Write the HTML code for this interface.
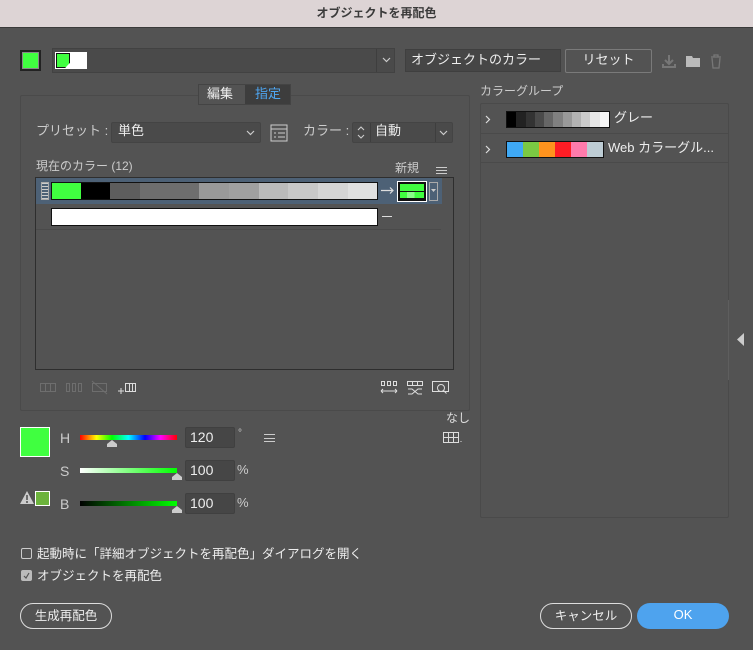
<!DOCTYPE html>
<html><head><meta charset="utf-8"><style>
*{box-sizing:border-box;margin:0;padding:0}
body{width:753px;height:650px;background:#535353;font-family:"Liberation Sans","Noto Sans CJK JP",sans-serif;color:#ddd;font-size:12px;position:relative;overflow:hidden}
.a{position:absolute}
.t{white-space:nowrap;line-height:1.15}
</style></head><body>
<div class="a" style="left:0;top:0;width:753px;height:28px;background:#ddd4d5;border-bottom:1px solid #3a3a3a"></div>
<div class="a t" style="left:0;top:7px;width:753px;text-align:center;color:#3a3a3a;font-size:12px;font-weight:bold">オブジェクトを再配色</div>

<div class="a" style="left:20px;top:50px;width:21px;height:21px;background:#222;padding:2px"><div style="width:100%;height:100%;background:#888;padding:1px"><div style="width:100%;height:100%;background:#40ff40"></div></div></div>
<div class="a" style="left:52px;top:48px;width:343px;height:25px;background:#4a4a4a;border:1px solid #424242"></div>
<div class="a" style="left:376px;top:49px;width:1px;height:23px;background:#3e3e3e"></div>
<svg class="a" style="left:382px;top:57px" width="9" height="6"><path d="M1 1l3.5 3.5L8 1" stroke="#ccc" fill="none" stroke-width="1.2"/></svg>
<div class="a" style="left:55px;top:52px;width:32px;height:17px;background:#fff"></div>
<div class="a" style="left:56px;top:53px;width:14px;height:15px;background:#40ff40;border:1px solid #111;clip-path:polygon(0 0,100% 0,100% 65%,65% 100%,0 100%)"></div>

<div class="a" style="left:405px;top:49px;width:156px;height:23px;background:#464646;border:1px solid #3f3f3f"></div>
<div class="a t" style="left:411px;top:53px;color:#eee;font-size:13px">オブジェクトのカラー</div>
<div class="a" style="left:565px;top:49px;width:87px;height:24px;border:1px solid #7a7a7a;border-radius:2px"></div>
<div class="a t" style="left:565px;top:53px;width:87px;text-align:center;color:#eee;font-size:13px">リセット</div>
<svg class="a" style="left:660px;top:52px" width="66" height="18"><path d="M9 3v8M5 8l4 4 4-4M3 12v3h12v-3" stroke="#777" stroke-width="2" fill="none"/><path d="M26 4h6l1 2h7v9H26z" fill="#bbb"/><path d="M51 5h10M54 5V3h4v2M52 6l1 10h6l1-10" stroke="#777" stroke-width="1.3" fill="none"/></svg>

<!-- left panel -->
<div class="a" style="left:20px;top:95px;width:450px;height:316px;border:1px solid #4a4a4a;border-radius:2px"></div>
<div class="a" style="left:198px;top:84px;width:93px;height:21px;background:#535353;border:1px solid #444"></div>
<div class="a" style="left:245px;top:85px;width:45px;height:19px;background:#3d3d3d"></div>
<div class="a t" style="left:207px;top:87px;color:#eee;font-size:13px">編集</div>
<div class="a t" style="left:255px;top:87px;color:#4ea6f2;font-size:13px">指定</div>

<div class="a t" style="left:36px;top:124px;color:#ccc;font-size:13px">プリセット :</div>
<div class="a" style="left:111px;top:122px;width:150px;height:21px;background:#4a4a4a;border:1px solid #444;border-radius:2px"></div>
<div class="a t" style="left:118px;top:124px;color:#eee;font-size:13px">単色</div>
<svg class="a" style="left:246px;top:130px" width="9" height="6"><path d="M1 1l3.5 3.5L8 1" stroke="#ccc" fill="none" stroke-width="1.2"/></svg>
<svg class="a" style="left:270px;top:124px" width="18" height="18"><rect x="1" y="1" width="16" height="16" fill="none" stroke="#ccc"/><path d="M1 5h16M4 9h2M8 9h7M4 13h2M8 13h7" stroke="#ccc"/></svg>
<div class="a t" style="left:303px;top:124px;color:#ccc;font-size:13px">カラー :</div>
<div class="a" style="left:352px;top:122px;width:101px;height:21px;background:#4a4a4a;border:1px solid #444;border-radius:2px"></div>
<div class="a" style="left:370px;top:123px;width:1px;height:19px;background:#3e3e3e"></div>
<div class="a" style="left:435px;top:123px;width:1px;height:19px;background:#3e3e3e"></div>
<svg class="a" style="left:356px;top:124px" width="10" height="17"><path d="M2 6l3-3 3 3M2 11l3 3 3-3" stroke="#ccc" fill="none" stroke-width="1.1"/></svg>
<div class="a t" style="left:375px;top:124px;color:#eee;font-size:13px">自動</div>
<svg class="a" style="left:439px;top:130px" width="9" height="6"><path d="M1 1l3.5 3.5L8 1" stroke="#ccc" fill="none" stroke-width="1.2"/></svg>

<div class="a t" style="left:36px;top:160px;color:#ccc;font-size:12px">現在のカラー (12)</div>
<div class="a t" style="left:395px;top:162px;color:#ccc;font-size:12px">新規</div>
<div class="a" style="left:436px;top:167px;width:11px;height:7px;border-top:1px solid #ccc;border-bottom:1px solid #ccc"></div>
<div class="a" style="left:436px;top:170px;width:11px;height:1px;background:#ccc"></div>

<div class="a" style="left:35px;top:177px;width:419px;height:193px;border:1px solid #2e2e2e"></div>
<div class="a" style="left:36px;top:178px;width:406px;height:26px;background:#4d6176"></div>
<div class="a" style="left:41px;top:182px;width:8px;height:18px;border:1px solid #aaa;background:repeating-linear-gradient(#ccc 0 1px,transparent 1px 3px)"></div>
<div class="a" style="left:51px;top:182px;width:327px;height:18px;border:1px solid #111;display:flex">
<div style="width:29px;background:#40ff40"></div><div style="width:29px;background:#000"></div><div style="width:30px;background:#5d5d5d"></div><div style="width:59px;background:#6e6e6e"></div><div style="width:30px;background:#999"></div><div style="width:30px;background:#a0a0a0"></div><div style="width:29px;background:#bbb"></div><div style="width:30px;background:#c8c8c8"></div><div style="width:30px;background:#d5d5d5"></div><div style="flex:1;background:#e0e0e0"></div></div>
<svg class="a" style="left:381px;top:186px" width="14" height="9"><path d="M0 4.5h12M9 1.5l3 3-3 3" stroke="#ddd" fill="none" stroke-width="1.2"/></svg>
<div class="a" style="left:397px;top:181px;width:30px;height:21px;border:1px solid #fff;background:#111;padding:2px"><div style="height:7px;background:#40ff40"></div><div style="height:6px;margin-top:1px;background:linear-gradient(90deg,#40ff40 30%,#8f8 30% 60%,#40ff40 60%)"></div></div>
<div class="a" style="left:429px;top:182px;width:9px;height:19px;border:1px solid #aaa"></div>
<svg class="a" style="left:431px;top:189px" width="5" height="4"><path d="M0 0h5L2.5 3z" fill="#ccc"/></svg>
<div class="a" style="left:51px;top:208px;width:327px;height:18px;border:1px solid #111;background:#fff"></div>
<div class="a" style="left:382px;top:216px;width:10px;height:1px;background:#ddd"></div>
<div class="a" style="left:36px;top:229px;width:405px;height:1px;background:#4a4a4a"></div>

<svg class="a" style="left:38px;top:380px" width="100" height="18"><g stroke="#6e6e6e" fill="none"><rect x="2.5" y="3.5" width="15" height="8"/><path d="M7.5 3.5v8M12.5 3.5v8"/><rect x="28.5" y="3.5" width="3" height="8"/><rect x="34.5" y="3.5" width="3" height="8"/><rect x="40.5" y="3.5" width="3" height="8"/><rect x="54.5" y="3.5" width="14" height="8"/><path d="M54 1l15 13"/></g><g stroke="#ddd" fill="none"><rect x="87.5" y="3.5" width="10" height="8"/><path d="M91.5 3.5v8M94.5 3.5v8M80 11h6M83 8v6"/></g></svg>
<svg class="a" style="left:380px;top:380px" width="72" height="20"><g stroke="#ddd" fill="none"><rect x="1.5" y="1.5" width="3" height="4"/><rect x="7.5" y="1.5" width="3" height="4"/><rect x="13.5" y="1.5" width="3" height="4"/><path d="M1 11h16M1 11l2-2M1 11l2 2M17 11l-2-2M17 11l-2 2"/><rect x="27.5" y="1.5" width="15" height="4"/><path d="M32.5 1.5v4M37.5 1.5v4M28 9h4l6 5h4M28 14h4l6-5h4"/><rect x="52.5" y="1.5" width="16" height="10"/><circle cx="61" cy="8" r="3.5" fill="#535353"/><path d="M63.5 10.5l3 3"/></g></svg>

<!-- HSB -->
<div class="a t" style="left:446px;top:412px;color:#ddd;font-size:12px">なし</div>
<svg class="a" style="left:443px;top:432px" width="20" height="12"><g stroke="#ddd" fill="none"><rect x="0.5" y="0.5" width="15" height="10"/><path d="M5.5 0.5v10M10.5 0.5v10M0.5 5.5h15"/></g><path d="M17 9h2l-1 1z" fill="#ddd"/></svg>
<div class="a" style="left:20px;top:427px;width:30px;height:30px;background:#40ff40;border:1px solid #fff"></div>
<div class="a t" style="left:60px;top:430px;color:#ccc;font-size:14px">H</div>
<div class="a t" style="left:60px;top:463px;color:#ccc;font-size:14px">S</div>
<div class="a t" style="left:60px;top:496px;color:#ccc;font-size:14px">B</div>
<div class="a" style="left:80px;top:435px;width:97px;height:5px;background:linear-gradient(90deg,red,#ff0 17%,#0f0 33%,#0ff 50%,#00f 67%,#f0f 83%,red)"></div>
<div class="a" style="left:80px;top:468px;width:97px;height:5px;background:linear-gradient(90deg,#fff,#0f0)"></div>
<div class="a" style="left:80px;top:501px;width:97px;height:5px;background:linear-gradient(90deg,#000,#0f0)"></div>
<svg class="a" style="left:107px;top:440px" width="10" height="7"><path d="M0 7V4l5-4 5 4v3z" fill="#ccc"/></svg>
<svg class="a" style="left:172px;top:473px" width="10" height="7"><path d="M0 7V4l5-4 5 4v3z" fill="#ccc"/></svg>
<svg class="a" style="left:172px;top:506px" width="10" height="7"><path d="M0 7V4l5-4 5 4v3z" fill="#ccc"/></svg>
<div class="a" style="left:185px;top:427px;width:50px;height:21px;background:#464646;border:1px solid #404040;border-radius:2px"></div>
<div class="a" style="left:185px;top:460px;width:50px;height:21px;background:#464646;border:1px solid #404040;border-radius:2px"></div>
<div class="a" style="left:185px;top:493px;width:50px;height:21px;background:#464646;border:1px solid #404040;border-radius:2px"></div>
<div class="a t" style="left:190px;top:429px;color:#eee;font-size:14px">120</div>
<div class="a t" style="left:190px;top:462px;color:#eee;font-size:14px">100</div>
<div class="a t" style="left:190px;top:495px;color:#eee;font-size:14px">100</div>
<div class="a t" style="left:238px;top:428px;color:#ccc;font-size:10px">°</div>
<div class="a t" style="left:237px;top:463px;color:#ccc;font-size:13px">%</div>
<div class="a t" style="left:237px;top:496px;color:#ccc;font-size:13px">%</div>
<div class="a" style="left:264px;top:434px;width:11px;height:8px;border-top:1px solid #ccc;border-bottom:1px solid #ccc"></div>
<div class="a" style="left:264px;top:438px;width:11px;height:1px;background:#ccc"></div>
<svg class="a" style="left:20px;top:491px" width="14" height="13"><path d="M7 0l7 13H0z" fill="#ccc"/><path d="M7 4v5M7 10v2" stroke="#535353" stroke-width="1.6"/></svg>
<div class="a" style="left:35px;top:491px;width:15px;height:15px;background:#6cb33c;border:1px solid #fff"></div>

<!-- right panel -->
<div class="a t" style="left:480px;top:85px;color:#ccc;font-size:12px">カラーグループ</div>
<div class="a" style="left:480px;top:103px;width:249px;height:415px;border:1px solid #4a4a4a;border-radius:2px"></div>
<div class="a" style="left:481px;top:133px;width:247px;height:1px;background:#4a4a4a"></div>
<div class="a" style="left:481px;top:162px;width:247px;height:1px;background:#4a4a4a"></div>
<svg class="a" style="left:485px;top:115px" width="6" height="9"><path d="M1 1l3.5 3.5L1 8" stroke="#ddd" fill="none" stroke-width="1.2"/></svg>
<svg class="a" style="left:485px;top:145px" width="6" height="9"><path d="M1 1l3.5 3.5L1 8" stroke="#ddd" fill="none" stroke-width="1.2"/></svg>
<div class="a" style="left:506px;top:111px;width:104px;height:17px;border:1px solid #111;display:flex"><div style="flex:1;background:#000"></div><div style="flex:1;background:#222"></div><div style="flex:1;background:#333"></div><div style="flex:1;background:#4a4a4a"></div><div style="flex:1;background:#666"></div><div style="flex:1;background:#808080"></div><div style="flex:1;background:#999"></div><div style="flex:1;background:#b3b3b3"></div><div style="flex:1;background:#ccc"></div><div style="flex:1;background:#e6e6e6"></div><div style="flex:1;background:#f5f5f5"></div></div>
<div class="a t" style="left:614px;top:111px;color:#eee;font-size:13px">グレー</div>
<div class="a" style="left:506px;top:141px;width:98px;height:17px;border:1px solid #111;display:flex"><div style="flex:1;background:#3fa9f5"></div><div style="flex:1;background:#7ac943"></div><div style="flex:1;background:#ff931e"></div><div style="flex:1;background:#ff1d25"></div><div style="flex:1;background:#ff7bac"></div><div style="flex:1;background:#bdccd4"></div></div>
<div class="a t" style="left:608px;top:141px;color:#eee;font-size:13px">Web カラーグル...</div>
<div class="a" style="left:728px;top:300px;width:1px;height:80px;background:#5e5e5e"></div>
<svg class="a" style="left:737px;top:333px" width="8" height="13"><path d="M7 0v13L0 6.5z" fill="#ccc"/></svg>

<!-- bottom -->
<div class="a" style="left:21px;top:548px;width:11px;height:11px;border:1px solid #ccc;border-radius:2px"></div>
<div class="a t" style="left:37px;top:547px;color:#eee;font-size:12.5px">起動時に「詳細オブジェクトを再配色」ダイアログを開く</div>
<div class="a" style="left:21px;top:570px;width:11px;height:11px;background:#bbb;border-radius:2px"></div>
<svg class="a" style="left:22px;top:571px" width="9" height="9"><path d="M2 5l2 2 3-5" stroke="#555" fill="none" stroke-width="1.2"/></svg>
<div class="a t" style="left:37px;top:569px;color:#eee;font-size:12.5px">オブジェクトを再配色</div>
<div class="a" style="left:20px;top:603px;width:92px;height:26px;border:1px solid #ddd;border-radius:13px"></div>
<div class="a t" style="left:20px;top:609px;width:92px;text-align:center;color:#eee;font-size:12.5px">生成再配色</div>
<div class="a" style="left:540px;top:603px;width:92px;height:26px;border:1px solid #ddd;border-radius:13px"></div>
<div class="a t" style="left:540px;top:609px;width:92px;text-align:center;color:#eee;font-size:12.5px">キャンセル</div>
<div class="a" style="left:637px;top:603px;width:92px;height:26px;background:#4ea3ee;border-radius:13px"></div>
<div class="a t" style="left:637px;top:608px;width:92px;text-align:center;color:#fff;font-size:13px">OK</div>
</body></html>
